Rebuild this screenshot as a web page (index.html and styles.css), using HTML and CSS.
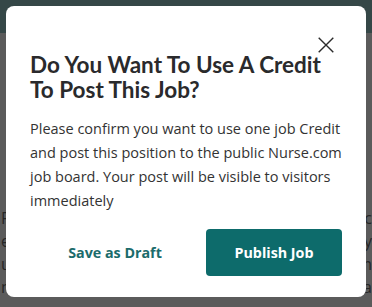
FILE: index.html
```html
<!DOCTYPE html>
<html>
<head>
<meta charset="utf-8">
<link rel="stylesheet" href="styles.css">
</head>
<body>
<div class="page">
  <div class="topbar"></div>
  <div class="content">
    <div class="line"><span>Fa</span><span>c</span></div>
    <div class="line"><span>e</span><span>y</span></div>
    <div class="line"><span>ug</span><span>m</span></div>
    <div class="line"><span>m</span><span>a</span></div>
  </div>
</div>
<div class="modal">
  <button class="close" aria-label="Close">
    <svg width="16" height="16" viewBox="0 0 16 16"><path d="M0.7 0.7 L15.3 15.3 M15.3 0.7 L0.7 15.3" stroke="#2b2b2b" stroke-width="1.4" fill="none"/></svg>
  </button>
  <h2 class="title">Do You Want To Use A Credit To Post This Job?</h2>
  <p class="text">Please confirm you want to use one job Credit and post this position to the public Nurse.com job board. Your post will be visible to visitors immediately</p>
  <div class="actions">
    <button class="btn btn-ghost">Save as Draft</button>
    <button class="btn btn-primary">Publish Job</button>
  </div>
</div>
</body>
</html>
```
FILE: styles.css
```css
* { box-sizing: border-box; }
html, body { margin: 0; padding: 0; }
body {
  width: 372px;
  height: 307px;
  overflow: hidden;
  background: #5b5b5b;
  font-family: "Open Sans", sans-serif;
  position: relative;
}
.page { height: 307px; }
.topbar { height: 33px; background: #354747; }
.content {
  padding-top: 174px;
  font-size: 16px;
  line-height: 23px;
  color: #262626;
}
.line {
  display: flex;
  justify-content: space-between;
  padding: 0 0 0 1px;
}
.modal {
  position: absolute;
  left: 6px;
  top: 6px;
  width: 360px;
  height: 291px;
  background: #fff;
  border-radius: 8px;
  padding: 46px 24px 0 24px;
}
.close {
  position: absolute;
  right: 32px;
  top: 31px;
  width: 16px;
  height: 16px;
  padding: 0;
  border: 0;
  background: none;
  display: flex;
}
.title {
  margin: 0;
  font-family: "Lato", sans-serif;
  font-weight: 700;
  font-size: 22.5px;
  line-height: 25px;
  color: #2a2a2c;
}
.text {
  margin: 15px 0 0 0;
  font-size: 14.5px;
  line-height: 24px;
  color: #333;
}
.actions {
  margin-top: 16px;
  display: flex;
  justify-content: flex-end;
  gap: 23px;
}
.btn {
  width: 136px;
  height: 47px;
  border: 0;
  border-radius: 4px;
  font-family: "Open Sans", sans-serif;
  font-weight: 700;
  font-size: 14.3px;
}
.btn-ghost { background: transparent; color: #1b6b6b; }
.btn-primary { background: #0d6b6b; color: #fff; }
```
